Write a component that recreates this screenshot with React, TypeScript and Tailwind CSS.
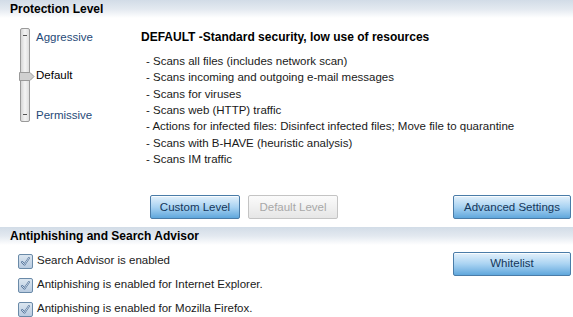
import React from "react";

const font = { fontFamily: '"Liberation Sans", Arial, sans-serif' };

function Header({ title }: { title: string }) {
  return (
    <div className="h-[18px] bg-gradient-to-b from-[#d2dce7] via-[#e3e9f0] to-white pl-[10px] flex items-center">
      <span className="text-[12px] font-bold text-black leading-none">{title}</span>
    </div>
  );
}

function BlueButton({ label, className = "" }: { label: string; className?: string }) {
  return (
    <div
      className={
        "h-[24px] flex items-center justify-center rounded-[2px] border border-[#4a7ca8] bg-gradient-to-b from-[#e4f1fb] via-[#a9d3f2] to-[#5fa7dc] text-[11.5px] text-[#14365a] shadow-[inset_0_1px_0_rgba(255,255,255,0.8)] " +
        className
      }
    >
      {label}
    </div>
  );
}

function Check({ label }: { label: string }) {
  return (
    <div className="h-[24px] flex items-center">
      <div className="w-[15px] h-[15px] rounded-[2px] border border-[#6a8aa8] bg-gradient-to-b from-[#dbe6f0] to-[#b9cbe0] flex items-center justify-center">
        <svg width="11" height="11" viewBox="0 0 11 11">
          <path d="M2 6 L4.5 8.5 L9 2" fill="none" stroke="#4d6e96" strokeWidth="2" strokeLinecap="round" strokeLinejoin="round" />
          <path d="M2 6 L4.5 8.5 L9 2" fill="none" stroke="#e9f1fa" strokeWidth="0.8" strokeLinecap="round" strokeLinejoin="round" />
        </svg>
      </div>
      <span className="ml-[4px] text-[11.5px] text-[#1a1a1a]">{label}</span>
    </div>
  );
}

const items = [
  "- Scans all files (includes network scan)",
  "- Scans incoming and outgoing e-mail messages",
  "- Scans for viruses",
  "- Scans web (HTTP) traffic",
  "- Actions for infected files: Disinfect infected files; Move file to quarantine",
  "- Scans with B-HAVE (heuristic analysis)",
  "- Scans IM traffic",
];

export default function App() {
  return (
    <div className="w-[573px] h-[317px] bg-white overflow-hidden" style={font}>
      <Header title="Protection Level" />
      <div className="h-[209px] flex">
        {/* slider column */}
        <div className="w-[141px] flex">
          <div className="ml-[20px] mt-[10px] relative w-[10px] h-[94px] rounded-[2px] border border-[#9a9a9a] bg-gradient-to-r from-[#d6d6d6] via-[#f4f4f4] to-[#dedede]">
            <div className="absolute left-[2px] top-[6px] w-[4px] h-[1px] bg-[#555]" />
            <div className="absolute left-[2px] bottom-[6px] w-[4px] h-[1px] bg-[#555]" />
            <svg className="absolute left-[-2px] top-[43px]" width="16" height="9" viewBox="0 0 16 9">
              <path d="M0.5 0.5 H11 L15 4.5 L11 8.5 H0.5 Z" fill="#d0d0d0" stroke="#9a9a9a" />
            </svg>
          </div>
          <div className="ml-[6px] flex flex-col text-[11.5px]">
            <div className="mt-[11px] h-[16px] leading-[16px] text-[#1f4a78]">Aggressive</div>
            <div className="mt-[22px] h-[16px] leading-[16px] text-black">Default</div>
            <div className="mt-[24px] h-[16px] leading-[16px] text-[#1f4a78]">Permissive</div>
          </div>
        </div>
        {/* description column */}
        <div className="flex-1 flex flex-col">
          <div className="mt-[11px] h-[16px] leading-[16px] text-[12px] font-bold text-black">
            DEFAULT -Standard security, low use of resources
          </div>
          <div className="mt-[8px] ml-[5px] flex flex-col text-[11.5px] text-[#1a1a1a]">
            {items.map((t) => (
              <div key={t} className="h-[16.33px] leading-[16px]">
                {t}
              </div>
            ))}
          </div>
          <div className="mt-[28px] flex items-center pr-[2px]">
            <BlueButton label="Custom Level" className="ml-[9px] w-[90px]" />
            <div className="ml-[8px] w-[90px] h-[24px] flex items-center justify-center rounded-[2px] border border-[#c4c4c4] bg-gradient-to-b from-[#fbfbfb] to-[#e6e6e6] text-[11.5px] text-[#a8a8a8]">
              Default Level
            </div>
            <BlueButton label="Advanced Settings" className="ml-auto w-[118px]" />
          </div>
        </div>
      </div>
      <Header title="Antiphishing and Search Advisor" />
      <div className="flex pt-[4px]">
        <div className="pl-[18px] flex flex-col">
          <Check label="Search Advisor is enabled" />
          <Check label="Antiphishing is enabled for Internet Explorer." />
          <Check label="Antiphishing is enabled for Mozilla Firefox." />
        </div>
        <div className="ml-auto mr-[2px] mt-[3px]">
          <BlueButton label="Whitelist" className="w-[118px]" />
        </div>
      </div>
    </div>
  );
}
